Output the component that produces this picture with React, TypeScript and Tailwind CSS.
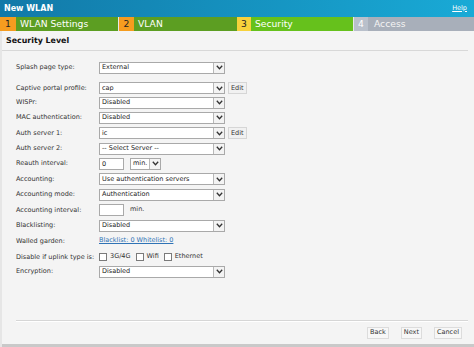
const font = { fontFamily: '"DejaVu Sans", Verdana, sans-serif' };

const Arrow = () => (
  <div className="flex h-full w-[11px] items-center justify-center border-l border-[#b8b8b8] bg-[#f3f3f3]">
    <svg width="7" height="5" viewBox="0 0 7 5">
      <path d="M0.8 0.8 L3.5 3.8 L6.2 0.8" fill="none" stroke="#333" strokeWidth="1.3" />
    </svg>
  </div>
);

const Select = ({ value, w = "w-[126px]" }: { value: string; w?: string }) => (
  <div className={`flex h-[12px] items-center border border-[#a9a9a9] bg-white ${w}`}>
    <span className="flex-1 truncate pl-[2px] text-[6.5px] leading-none text-[#222]">{value}</span>
    <Arrow />
  </div>
);

const EditBtn = () => (
  <div className="ml-[3px] flex h-[12px] items-center border border-[#d6d6d6] bg-[#f1f1f1] px-[2px] text-[6.5px] leading-none text-[#333]">
    Edit
  </div>
);

const Box = () => <div className="h-[8px] w-[8px] border border-[#7a7a7a] bg-white" />;

const Row = ({ label, h = "h-[15px]", children }: { label: string; h?: string; children: React.ReactNode }) => (
  <div className={`flex items-center ${h}`}>
    <div className="w-[83px] text-[6.5px] leading-none text-[#333]">{label}</div>
    <div className="flex items-center">{children}</div>
  </div>
);

export default function App() {
  return (
    <div className="flex h-[347px] w-[474px] flex-col overflow-hidden bg-[#f4f4f4]" style={font}>
      <header className="flex h-[17px] items-center justify-between bg-gradient-to-r from-[#1279a8] to-[#19aad6] px-[4px]">
        <span className="text-[8px] font-bold text-white">New WLAN</span>
        <span className="pr-[3px] text-[6.5px] text-white underline">Help</span>
      </header>

      <nav className="flex h-[14px] text-[9.2px] leading-none">
        <div className="flex w-[119px] border-r border-[#e8e8e8]">
          <div className="flex w-[16px] items-center justify-center bg-[#f59c1f] text-[#222]">1</div>
          <div className="flex flex-1 items-center bg-[#5c9e22] pl-[4px] text-white">WLAN Settings</div>
        </div>
        <div className="flex w-[118px]">
          <div className="flex w-[15px] items-center justify-center bg-[#f59c1f] text-[#222]">2</div>
          <div className="flex flex-1 items-center bg-[#5c9e22] pl-[4px] text-white">VLAN</div>
        </div>
        <div className="flex w-[116px]">
          <div className="flex w-[14px] items-center justify-center bg-[#f7d23c] text-[#222]">3</div>
          <div className="flex flex-1 items-center bg-[#66c11c] pl-[4px] text-white">Security</div>
        </div>
        <div className="flex flex-1 border-l border-[#e8e8e8]">
          <div className="flex w-[14px] items-center justify-center bg-[#b9c0cb] text-white">4</div>
          <div className="flex flex-1 items-center bg-[#a8afba] pl-[6px] text-[#f4f4f4]">Access</div>
        </div>
      </nav>

      <div className="flex flex-1 flex-col border-l-2 border-[#e6e6e6]">
        <div className="mr-[6px] flex h-[20px] items-end border-b border-[#d8d8d8] pb-[3px] pl-[4px] text-[7.9px] font-bold text-[#111]">
          Security Level
        </div>

        <div className="mt-[9px] flex flex-col pl-[14px]">
          <Row label="Splash page type:" h="h-[15px]">
            <Select value="External" />
          </Row>
          <div className="h-[6px]" />
          <Row label="Captive portal profile:" h="h-[14px]">
            <Select value="cap" />
            <EditBtn />
          </Row>
          <Row label="WISPr:">
            <Select value="Disabled" />
          </Row>
          <Row label="MAC authentication:">
            <Select value="Disabled" />
          </Row>
          <Row label="Auth server 1:" h="h-[16px]">
            <Select value="ic" />
            <EditBtn />
          </Row>
          <Row label="Auth server 2:">
            <Select value="-- Select Server --" />
          </Row>
          <Row label="Reauth interval:">
            <div className="h-[12px] w-[25px] border border-[#a9a9a9] bg-white pl-[2px] text-[6.5px] leading-[10px] text-[#222]">0</div>
            <div className="ml-[6px]">
              <Select value="min." w="w-[31px]" />
            </div>
          </Row>
          <Row label="Accounting:" h="h-[16px]">
            <Select value="Use authentication servers" />
          </Row>
          <Row label="Accounting mode:">
            <Select value="Authentication" />
          </Row>
          <Row label="Accounting interval:" h="h-[16px]">
            <div className="h-[12px] w-[25px] border border-[#a9a9a9] bg-white" />
            <span className="ml-[6px] text-[6.5px] text-[#333]">min.</span>
          </Row>
          <Row label="Blacklisting:">
            <Select value="Disabled" />
          </Row>
          <Row label="Walled garden:" h="h-[16px]">
            <span className="text-[6.5px] text-[#2f73b5] underline">Blacklist: 0 Whitelist: 0</span>
          </Row>
          <Row label="Disable if uplink type is:" h="h-[16px]">
            <div className="flex items-center gap-[3px] text-[6.5px] text-[#333]">
              <Box />
              <span className="mr-[2px]">3G/4G</span>
              <Box />
              <span className="mr-[2px]">Wifi</span>
              <Box />
              <span>Ethernet</span>
            </div>
          </Row>
          <Row label="Encryption:" h="h-[13px]">
            <Select value="Disabled" />
          </Row>
        </div>

        <div className="flex-1" />

        <div className="ml-[14px] mr-[6px] border-t border-b border-t-[#d6d6d6] border-b-white" />
        <div className="flex h-[22px] items-center justify-end gap-[12px] pr-[12px] text-[6.5px] text-[#333]">
          <div className="flex h-[12px] items-center border border-[#dcdcdc] bg-[#f7f7f7] px-[2px]">Back</div>
          <div className="flex h-[12px] items-center border border-[#dcdcdc] bg-[#f7f7f7] px-[2px]">Next</div>
          <div className="flex h-[12px] items-center border border-[#dcdcdc] bg-[#f7f7f7] px-[2px]">Cancel</div>
        </div>
        <div className="h-[3px] bg-[#c9c9c9]" />
      </div>
    </div>
  );
}
